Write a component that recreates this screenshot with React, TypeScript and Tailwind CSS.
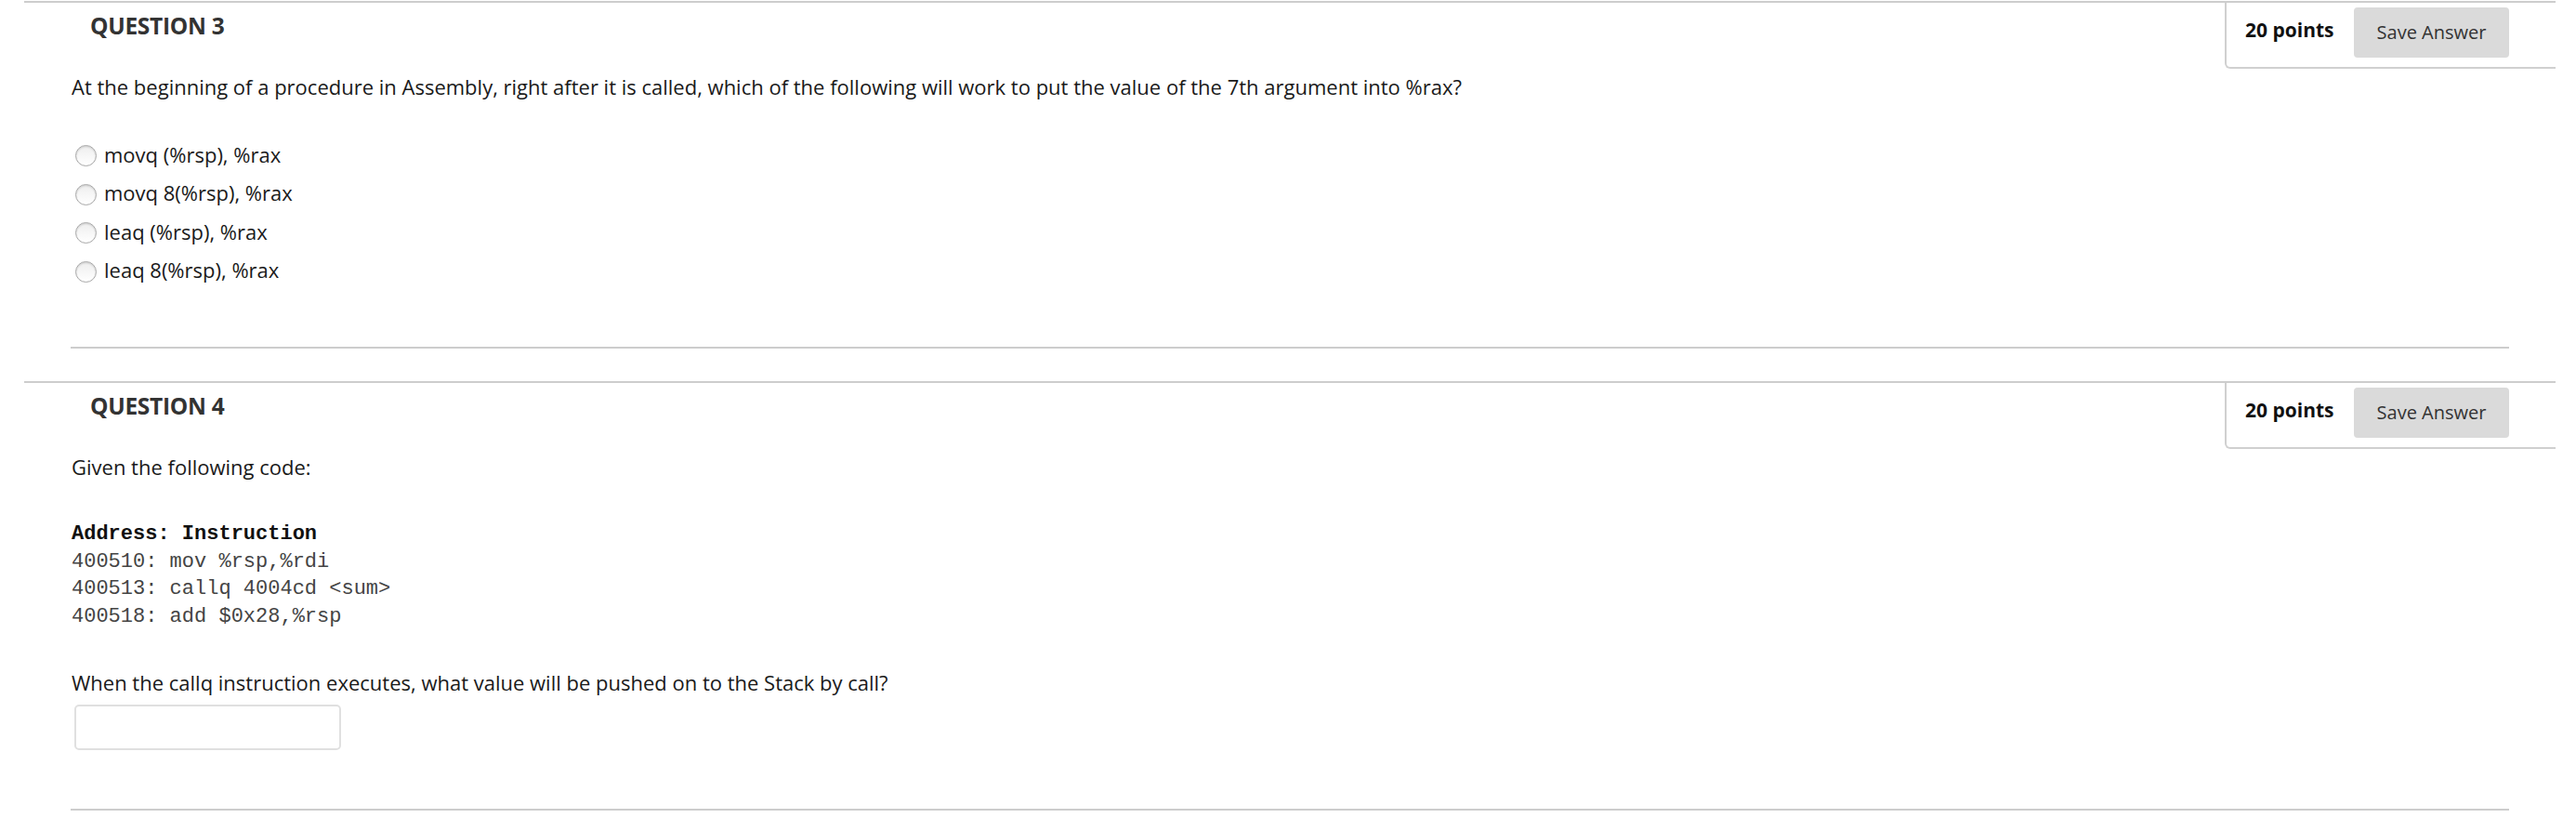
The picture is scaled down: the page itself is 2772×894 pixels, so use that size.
import React from "react";

const options = [
  "movq (%rsp), %rax",
  "movq 8(%rsp), %rax",
  "leaq (%rsp), %rax",
  "leaq 8(%rsp), %rax",
];

const code = [
  "400510: mov %rsp,%rdi",
  "400513: callq 4004cd <sum>",
  "400518: add $0x28,%rsp",
];

function Header({ n }: { n: number }) {
  return (
    <div className="flex justify-between">
      <h3 className="pl-[71px] pt-[8px] text-[24.5px] leading-[34px] font-bold tracking-[-0.3px] text-[#333]">
        QUESTION {n}
      </h3>
      {/* points + save */}
      <div className="w-[356px] h-[71px] border-l-2 border-b-2 border-[#d0d0d0] rounded-bl-[6px] flex items-start justify-between pl-[20px] pr-[50px] pt-[5px]">
        <span className="mt-[10px] text-[21px] leading-[28px] font-bold text-[#111]">20 points</span>
        <button className="w-[167px] h-[54px] rounded-[4px] bg-[#dadada] text-[20px] text-[#333]">
          Save Answer
        </button>
      </div>
    </div>
  );
}

function Radio({ label }: { label: string }) {
  return (
    <label className="flex items-center h-[41.5px]">
      <span className="ml-[4px] mt-[4px] w-[23px] h-[23px] rounded-full border border-[#a8a8a8] bg-gradient-to-b from-[#eeeeee] to-white shadow-[inset_0_1px_2px_rgba(0,0,0,0.15)]" />
      <span className="ml-[8px] text-[22px] leading-[30px] text-[#1a1a1a]">{label}</span>
    </label>
  );
}

export default function App() {
  return (
    <div className="w-[2772px] min-h-[894px] bg-white pt-[1px] font-['Open_Sans',sans-serif]">
      {/* Question 3 */}
      <section className="ml-[26px] mr-[22px] border-t-2 border-[#cdcdcd]">
        <Header n={3} />
        <div className="pl-[51px] pt-[4px]">
          <p className="text-[22px] leading-[30px] text-[#1a1a1a]">
            At the beginning of a procedure in Assembly, right after it is called, which of the following will work to put the value of the 7th argument into %rax?
          </p>
          <div className="mt-[37px]">
            {options.map((o) => (
              <Radio key={o} label={o} />
            ))}
          </div>
        </div>
        <div className="mt-[62px] mx-[50px] h-[2px] bg-[#cdcdcd]" />
      </section>

      {/* Question 4 */}
      <section className="mt-[35px] ml-[26px] mr-[22px] border-t-2 border-[#cdcdcd]">
        <Header n={4} />
        <div className="pl-[51px] pt-[4px]">
          <p className="text-[22px] leading-[30px] text-[#1a1a1a]">Given the following code:</p>
          <div className="mt-[43px] font-['Liberation_Mono',monospace] text-[22px] leading-[29.5px] text-[#444]">
            <div className="font-bold text-[#111]">Address: Instruction</div>
            {code.map((c) => (
              <div key={c} className="whitespace-pre">{c}</div>
            ))}
          </div>
          <p className="mt-[41px] text-[22px] leading-[30px] text-[#1a1a1a]">
            When the callq instruction executes, what value will be pushed on to the Stack by call?
          </p>
          <input
            type="text"
            className="mt-[9px] ml-[3px] w-[287px] h-[49px] border-2 border-[#e0e0e0] rounded-[5px] outline-none"
          />
        </div>
        <div className="mt-[63px] mx-[50px] h-[2px] bg-[#cdcdcd]" />
      </section>
    </div>
  );
}
